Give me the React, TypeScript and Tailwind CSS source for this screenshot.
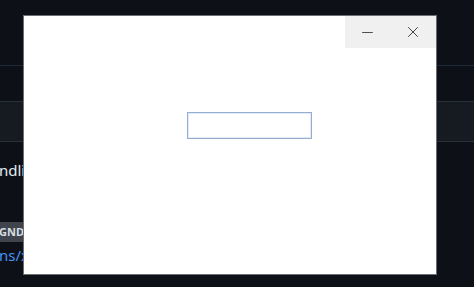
import { Minus, X } from 'lucide-react'

function PageBehind() {
  return (
    <div className="flex h-full flex-col" style={{ fontFamily: '"Noto Sans", "Open Sans", sans-serif' }}>
      <div className="h-[66px] border-b border-[#1f2a38]" />
      <div className="h-[35px]" />
      <div className="h-[41px] border-y border-[#2a3038] bg-[#161b22]" />
      <div className="mt-[18px] -ml-[1px] text-[15px] leading-[20px] text-[#e6edf3]">ndling events</div>
      <div className="mt-[42px] flex">
        <span className="-ml-[7px] rounded-[7px] bg-[#40454d] px-[6px] text-[11px] font-bold leading-[20px] text-[#d8dde3]">
          GND
        </span>
      </div>
      <div className="mt-[4px] -ml-[1px] text-[15px] leading-[18px] text-[#4493f8]">ns/xx</div>
    </div>
  )
}

function Dialog() {
  return (
    <div className="absolute left-[23px] top-[15px] flex h-[260px] w-[414px] flex-col border border-[#6a6d72] bg-white">
      <div className="flex h-[32px] justify-end">
        <div className="flex h-full w-[91px] bg-[#f0f0f0]">
          <button className="flex h-full flex-1 items-center justify-center text-[#222]">
            <Minus size={17} strokeWidth={1.1} />
          </button>
          <button className="flex h-full flex-1 items-center justify-center text-[#222]">
            <X size={18} strokeWidth={1.1} />
          </button>
        </div>
      </div>
      <div className="flex pl-[163px] pt-[64px]">
        <input
          className="h-[27px] w-[125px] border border-[#93aed2] shadow-[inset_0_0_0_1px_#e2ecf8] outline-none"
          aria-label="value"
        />
      </div>
    </div>
  )
}

export default function App() {
  return (
    <div className="relative h-[287px] w-[474px] overflow-hidden bg-[#0d1117]">
      <PageBehind />
      <Dialog />
    </div>
  )
}
